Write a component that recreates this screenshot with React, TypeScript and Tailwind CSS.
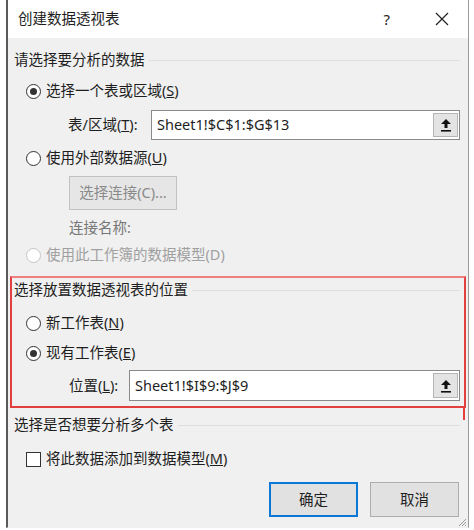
import React from 'react';

const font = "font-['Noto_Sans','Noto_Sans_CJK_SC',sans-serif]";

function Radio({ checked = false, disabled = false }: { checked?: boolean; disabled?: boolean }) {
  return (
    <span
      className={`w-[15px] h-[15px] rounded-full border flex items-center justify-center bg-white ${
        disabled ? 'border-[#c4c4c4] bg-[#f3f3f3]' : 'border-[#333]'
      }`}
    >
      {checked && <span className="w-[7px] h-[7px] rounded-full bg-[#333]" />}
    </span>
  );
}

function SectionTitle({ children, mt }: { children: React.ReactNode; mt: string }) {
  return (
    <div className={`flex items-center h-[24px] pl-[6px] pr-[8px] ${mt}`}>
      <span className="text-[14.5px] text-[#1e1e1e] whitespace-nowrap">{children}</span>
      <span className="flex-1 h-px bg-[#dedede] ml-[4px]" />
    </div>
  );
}

function RadioRow({ children, checked, disabled, mt }: { children: React.ReactNode; checked?: boolean; disabled?: boolean; mt: string }) {
  return (
    <div className={`flex items-center h-[24px] pl-[18px] gap-[5px] ${mt}`}>
      <Radio checked={checked} disabled={disabled} />
      <span className={`text-[14.5px] ${disabled ? 'text-[#a0a0a0]' : 'text-[#1e1e1e]'}`}>{children}</span>
    </div>
  );
}

function PickIcon() {
  return (
    <svg width="12" height="14" viewBox="0 0 12 14">
      <path d="M6 1 L11 6 L7.5 6 L7.5 10 L4.5 10 L4.5 6 L1 6 Z" fill="#111" />
      <rect x="1" y="12" width="10" height="1.6" fill="#111" />
    </svg>
  );
}

function RangeInput({ value, width }: { value: string; width: string }) {
  return (
    <div className={`${width} h-full border border-[#8a8a8a] bg-white flex items-stretch`}>
      <span className="flex-1 flex items-center pl-[5px] text-[14.5px] text-[#1e1e1e]">{value}</span>
      <span className="w-[25px] my-[2px] mr-[1px] border border-[#b5b5b5] bg-[#e3e3e3] flex items-center justify-center">
        <PickIcon />
      </span>
    </div>
  );
}

export default function App() {
  return (
    <div className={`relative w-[474px] h-[530px] bg-white overflow-hidden ${font}`}>
      <div className="ml-[6px] w-[463px] h-[528px] border-l-2 border-r border-l-[#5a5a5a] border-r-[#9a9a9a] border-b border-b-[#c8c8c8] flex flex-col">
        {/* Title bar */}
        <div className="h-[38px] bg-white flex items-center pl-[10px] shrink-0">
          <span className="text-[14.5px] text-[#1e1e1e]">创建数据透视表</span>
          <span className="ml-auto mr-[45px] text-[15px] text-[#1e1e1e]">?</span>
          <svg width="14" height="14" viewBox="0 0 14 14" className="mr-[19px]">
            <path d="M1 1 L13 13 M13 1 L1 13" stroke="#222" strokeWidth="1.2" />
          </svg>
        </div>

        {/* Body */}
        <div className="flex-1 bg-[#f0f0f0] flex flex-col">
          <SectionTitle mt="mt-[10px]">请选择要分析的数据</SectionTitle>
          <RadioRow checked mt="mt-[7px]">
            选择一个表或区域(<u>S</u>)
          </RadioRow>
          <div className="flex items-center h-[30px] mt-[7px]">
            <span className="w-[143px] pl-[60px] text-[14.5px] text-[#1e1e1e] whitespace-nowrap">
              表/区域(<u>T</u>):
            </span>
            <RangeInput value="Sheet1!$C$1:$G$13" width="w-[309px]" />
          </div>
          <RadioRow mt="mt-[6px]">
            使用外部数据源(<u>U</u>)
          </RadioRow>
          <div className="pl-[61px] mt-[6px]">
            <div className="w-[108px] h-[34px] border border-[#c2c2c2] bg-[#e6e6e6] flex items-center justify-center text-[14.5px] text-[#8a8a8a]">
              选择连接(C)...
            </div>
          </div>
          <div className="h-[24px] mt-[6px] pl-[61px] flex items-center text-[14.5px] text-[#777]">连接名称:</div>
          <RadioRow disabled mt="mt-[3px]">
            使用此工作簿的数据模型(D)
          </RadioRow>

          <SectionTitle mt="mt-[11px]">选择放置数据透视表的位置</SectionTitle>
          <RadioRow mt="mt-[9px]">
            新工作表(<u>N</u>)
          </RadioRow>
          <RadioRow checked mt="mt-[6px]">
            现有工作表(<u>E</u>)
          </RadioRow>
          <div className="flex items-center h-[31px] mt-[5px]">
            <span className="w-[121px] pl-[61px] text-[14.5px] text-[#1e1e1e] whitespace-nowrap">
              位置(<u>L</u>):
            </span>
            <RangeInput value="Sheet1!$I$9:$J$9" width="w-[331px]" />
          </div>

          <SectionTitle mt="mt-[12px]">选择是否想要分析多个表</SectionTitle>
          <div className="flex items-center h-[24px] mt-[10px] pl-[18px] gap-[5px]">
            <span className="w-[15px] h-[15px] border border-[#333] bg-white" />
            <span className="text-[14.5px] text-[#1e1e1e]">
              将此数据添加到数据模型(<u>M</u>)
            </span>
          </div>

          <div className="flex justify-end gap-[12px] pr-[9px] mt-[11px]">
            <button className="w-[89px] h-[35px] border-2 border-[#0a78d7] bg-[#e1e1e1] text-[14.5px] text-[#1e1e1e]">
              确定
            </button>
            <button className="w-[89px] h-[35px] border border-[#adadad] bg-[#e1e1e1] text-[14.5px] text-[#1e1e1e]">
              取消
            </button>
          </div>
          <div className="flex-1 flex justify-end items-end pr-[1px] pb-[1px]">
            <svg width="10" height="10" viewBox="0 0 10 10">
              <path d="M9 2 L2 9 M9 5 L5 9 M9 8 L8 9" stroke="#999" strokeWidth="1" />
            </svg>
          </div>
        </div>
      </div>

      {/* red annotation */}
      <div className="absolute left-[10px] top-[276px] w-[456px] h-[132px] border-2 border-[#e2403e] border-t-[#ee8080] pointer-events-none" />
      <div className="absolute left-[463px] top-[406px] w-[2px] h-[14px] bg-[#e2403e]" />
    </div>
  );
}
